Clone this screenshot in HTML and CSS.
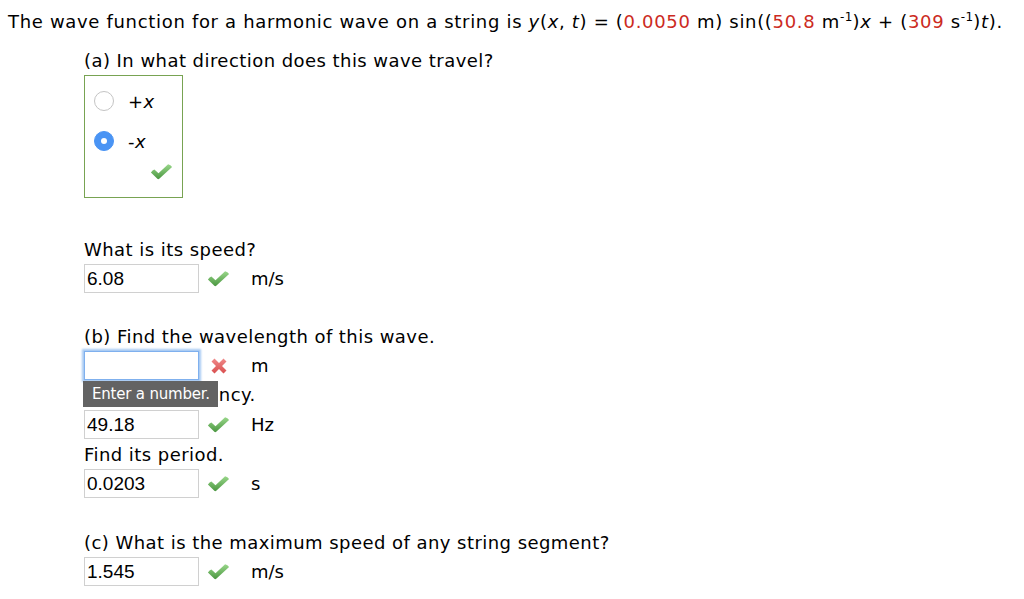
FILE: index.html
```html
<!DOCTYPE html>
<html>
<head>
<meta charset="utf-8">
<link rel="stylesheet" href="styles.css">
</head>
<body>
<svg class="defs" width="0" height="0" aria-hidden="true"><defs><linearGradient id="g1" x1="0" y1="0" x2="0" y2="1"><stop offset="0" stop-color="#9ad88b"/><stop offset="1" stop-color="#4a9640"/></linearGradient><linearGradient id="g2" x1="0" y1="0" x2="0" y2="1"><stop offset="0" stop-color="#f08a8a"/><stop offset="1" stop-color="#d94f4f"/></linearGradient></defs></svg>
<p class="stem">The wave function for a harmonic wave on a string is <i>y</i>(<i>x</i>, <i>t</i>) = (<span class="red">0.0050</span> m) sin((<span class="red">50.8</span> m<sup>-1</sup>)<i>x</i> + (<span class="red">309</span> s<sup>-1</sup>)<i>t</i>).</p>
<div class="part">
  <p class="q qa">(a) In what direction does this wave travel?</p>
  <div class="choices">
    <div class="choice"><span class="radio"></span><span class="lab">+<i>x</i></span></div>
    <div class="choice"><span class="radio on"></span><span class="lab">-<i>x</i></span></div>
    <div class="boxmark">
      <svg class="check" viewBox="0 0 24 18" width="23" height="17"><path d="M0.8 10 Q2.5 7.5 4.5 6.8 L8.8 10.8 L19 1.2 Q21.8 1.8 23.2 4.2 L9.6 16.8 Q8.6 17.6 7.6 16.8 Z" fill="url(#g1)"/></svg>
    </div>
  </div>

  <p class="q g1">What is its speed?</p>
  <div class="row"><span class="field">6.08</span><span class="mark"><svg class="check" viewBox="0 0 24 18" width="23" height="17"><path d="M0.8 10 Q2.5 7.5 4.5 6.8 L8.8 10.8 L19 1.2 Q21.8 1.8 23.2 4.2 L9.6 16.8 Q8.6 17.6 7.6 16.8 Z" fill="url(#g1)"/></svg></span><span class="unit">m/s</span></div>

  <p class="q g2">(b) Find the wavelength of this wave.</p>
  <div class="row"><span class="field focus"></span><span class="mark"><svg class="xmark" viewBox="0 0 20 20" width="20" height="20"><path d="M2.5 5.5 L5.5 2.5 L10 7 L14.5 2.5 L17.5 5.5 L13 10 L17.5 14.5 L14.5 17.5 L10 13 L5.5 17.5 L2.5 14.5 L7 10 Z" fill="url(#g2)"/></svg></span><span class="unit">m</span></div>
  <div class="tipwrap">
    <p class="q">Find its frequency.</p>
    <span class="tip">Enter a number.</span>
  </div>
  <div class="row r3"><span class="field">49.18</span><span class="mark"><svg class="check" viewBox="0 0 24 18" width="23" height="17"><path d="M0.8 10 Q2.5 7.5 4.5 6.8 L8.8 10.8 L19 1.2 Q21.8 1.8 23.2 4.2 L9.6 16.8 Q8.6 17.6 7.6 16.8 Z" fill="url(#g1)"/></svg></span><span class="unit">Hz</span></div>
  <p class="q g3">Find its period.</p>
  <div class="row"><span class="field">0.0203</span><span class="mark"><svg class="check" viewBox="0 0 24 18" width="23" height="17"><path d="M0.8 10 Q2.5 7.5 4.5 6.8 L8.8 10.8 L19 1.2 Q21.8 1.8 23.2 4.2 L9.6 16.8 Q8.6 17.6 7.6 16.8 Z" fill="url(#g1)"/></svg></span><span class="unit">s</span></div>

  <p class="q g4">(c) What is the maximum speed of any string segment?</p>
  <div class="row"><span class="field">1.545</span><span class="mark"><svg class="check" viewBox="0 0 24 18" width="23" height="17"><path d="M0.8 10 Q2.5 7.5 4.5 6.8 L8.8 10.8 L19 1.2 Q21.8 1.8 23.2 4.2 L9.6 16.8 Q8.6 17.6 7.6 16.8 Z" fill="url(#g1)"/></svg></span><span class="unit">m/s</span></div>
</div>
</body>
</html>
```
FILE: styles.css
```css
html, body { margin: 0; padding: 0; background: #fff; }
body {
  font-family: "DejaVu Sans", Verdana, sans-serif;
  font-size: 18px;
  color: #000;
  padding: 10px 0 0 8px;
}
.defs { position: absolute; width: 0; height: 0; }
p { margin: 0; }
.stem { line-height: 24px; white-space: nowrap; letter-spacing: 0.68px; }
.red { color: #cc2a22; }
sup { font-size: 12px; line-height: 0; vertical-align: 7px; letter-spacing: 0.3px; }
.part { padding-left: 76px; }
.q { line-height: 24px; letter-spacing: 0.45px; white-space: nowrap; }
.qa { margin-top: 15px; }
.g1 { margin-top: 40px; }
.g2 { margin-top: 32px; }
.g3 { margin-top: 4px; }
.g4 { margin-top: 33px; }
.choices {
  margin-top: 2px;
  width: 99px;
  height: 123px;
  border: 1px solid #78a352;
  box-sizing: border-box;
  padding: 15px 0 0 9px;
  display: flex;
  flex-direction: column;
}
.choice { display: flex; align-items: center; height: 20px; margin-bottom: 20px; }
.radio {
  width: 20px; height: 20px; border-radius: 50%;
  border: 1px solid #c4c4c4; background: #fff;
  box-sizing: border-box; flex: none;
}
.radio.on { background: #4a94f4; border-color: #4a94f4; position: relative; }
.radio.on::after {
  content: ""; position: absolute; left: 6px; top: 6px;
  width: 6px; height: 6px; border-radius: 50%; background: #fff;
}
.lab { margin-left: 14px; letter-spacing: 0.4px; }
.boxmark { display: flex; justify-content: flex-end; padding-right: 9px; margin-top: -8px; }
.row { display: flex; align-items: center; height: 29px; margin-top: 2px; }
.r3 { margin-top: 3px; }
.field {
  width: 115px; height: 29px; box-sizing: border-box;
  border: 1px solid #d0d0d0; background: #fff;
  font-family: "Liberation Sans", Arial, sans-serif; font-size: 19px;
  padding: 0 0 0 2px; line-height: 27px; flex: none;
}
.field.focus {
  border: 1px solid #7fb0ee;
  box-shadow: 0 0 2px 2px #a6c9f3;
}
.mark { width: 52px; display: flex; padding-left: 8px; box-sizing: border-box; }
.xmark { margin-left: 2px; }
.tipwrap { position: relative; margin-top: 3px; }
.tip {
  position: absolute; left: -1px; top: -2px;
  background: #636363; color: #fff;
  font-size: 15px; line-height: 26px; padding: 0 8px 0 9px;
  font-family: "DejaVu Sans", Verdana, sans-serif;
  letter-spacing: -0.2px; white-space: nowrap;
}
.check { display: block; }
```
